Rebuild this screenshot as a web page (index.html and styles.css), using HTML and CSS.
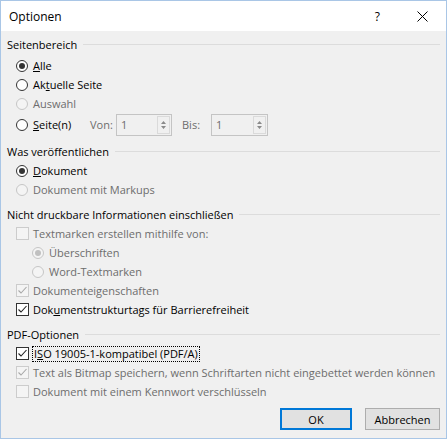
FILE: index.html
```html
<!DOCTYPE html>
<html lang="de">
<head>
<meta charset="utf-8">
<title>Optionen</title>
<link rel="stylesheet" href="styles.css">
</head>
<body>
<div class="window">
  <div class="titlebar">
    <span class="title">Optionen</span>
    <span class="help">?</span>
    <span class="close"><svg width="11" height="11" viewBox="0 0 11 11"><path d="M0.5 0.5 L10.5 10.5 M10.5 0.5 L0.5 10.5" stroke="#000" stroke-width="1" fill="none"/></svg></span>
  </div>
  <div class="content">
    <section class="group first">
      <div class="group-head"><span>Seitenbereich</span></div>
      <div class="row"><span class="radio on"></span><span class="label"><u>A</u>lle</span></div>
      <div class="row"><span class="radio"></span><span class="label">Ak<u>t</u>uelle Seite</span></div>
      <div class="row disabled"><span class="radio"></span><span class="label">Auswahl</span></div>
      <div class="row spinrow">
        <span class="radio"></span><span class="label pages"><u>S</u>eite(n)</span>
        <span class="spin-label von">Von:</span>
        <span class="spin s1"><span class="spin-val">1</span><span class="spin-btn"><svg width="7" height="12" viewBox="0 0 7 12"><path d="M3.5 2 L6 5 L1 5 Z M1 7 L6 7 L3.5 10 Z" fill="#8a8a8a"/></svg></span></span>
        <span class="spin-label bis">Bis:</span>
        <span class="spin s2"><span class="spin-val">1</span><span class="spin-btn"><svg width="7" height="12" viewBox="0 0 7 12"><path d="M3.5 2 L6 5 L1 5 Z M1 7 L6 7 L3.5 10 Z" fill="#8a8a8a"/></svg></span></span>
      </div>
    </section>
    <section class="group">
      <div class="group-head"><span>Was veröffentlichen</span></div>
      <div class="row"><span class="radio on"></span><span class="label"><u>D</u>okument</span></div>
      <div class="row disabled"><span class="radio"></span><span class="label">Dokument mit Markups</span></div>
    </section>
    <section class="group">
      <div class="group-head"><span>Nicht druckbare Informationen einschließen</span></div>
      <div class="row disabled"><span class="check"></span><span class="label">Textmarken erstellen mithilfe von:</span></div>
      <div class="row sub disabled"><span class="radio on"></span><span class="label">Überschriften</span></div>
      <div class="row sub disabled"><span class="radio"></span><span class="label">Word-Textmarken</span></div>
      <div class="row disabled"><span class="check"><svg width="11" height="11" viewBox="0 0 11 11"><path d="M1.5 5.5 L4 8 L9.5 2" stroke="#a8a8a8" stroke-width="1.1" fill="none"/></svg></span><span class="label">Dokumenteigenschaften</span></div>
      <div class="row"><span class="check"><svg width="11" height="11" viewBox="0 0 11 11"><path d="M1.5 5.5 L4 8 L9.5 2" stroke="#222" stroke-width="1.1" fill="none"/></svg></span><span class="label">Dok<u>u</u>mentstrukturtags für Barrierefreiheit</span></div>
    </section>
    <section class="group">
      <div class="group-head"><span>PDF-Optionen</span></div>
      <div class="row"><span class="check"><svg width="11" height="11" viewBox="0 0 11 11"><path d="M1.5 5.5 L4 8 L9.5 2" stroke="#222" stroke-width="1.1" fill="none"/></svg></span><span class="label focus">I<u>S</u>O 19005-1-kompatibel (PDF/A)</span></div>
      <div class="row disabled"><span class="check"><svg width="11" height="11" viewBox="0 0 11 11"><path d="M1.5 5.5 L4 8 L9.5 2" stroke="#a8a8a8" stroke-width="1.1" fill="none"/></svg></span><span class="label">Text als Bitmap speichern, wenn Schriftarten nicht eingebettet werden können</span></div>
      <div class="row disabled"><span class="check"></span><span class="label">Dokument mit einem Kennwort verschlüsseln</span></div>
    </section>
  </div>
  <div class="buttons">
    <span class="btn default">OK</span>
    <span class="btn cancel">Abbrechen</span>
  </div>
</div>
</body>
</html>
```

FILE: styles.css
```css
html, body {
  margin: 0;
  padding: 0;
  background: #f0f0f0;
}
body {
  font-family: "Open Sans", "Noto Sans", sans-serif;
  font-size: 11px;
  color: #000;
}
.window {
  width: 447px;
  height: 439px;
  box-sizing: border-box;
  border: 1px solid #a9c6e6;
  background: #f0f0f0;
  display: flex;
  flex-direction: column;
}
.titlebar {
  height: 30px;
  background: #fff;
  display: flex;
  align-items: center;
  padding: 0 18px 0 8px;
  flex: none;
}
.title {
  flex: 1;
  font-size: 12px;
}
.help {
  font-size: 12px;
  margin-right: 37px;
}
.close {
  display: flex;
  width: 11px;
  height: 11px;
}
.content {
  padding: 3px 6px 0 6px;
}
.group + .group {
  margin-top: 5px;
}
.group-head {
  height: 20px;
  display: flex;
  align-items: center;
  font-size: 11px;
}
.group-head::after {
  content: "";
  flex: 1;
  height: 1px;
  background: #dcdcdc;
  margin-left: 6px;
}
.first .group-head + .row {
  margin-top: 2px;
}
.row {
  height: 19px;
  display: flex;
  align-items: center;
  padding-left: 9px;
}
.row.sub {
  padding-left: 25px;
}
.label {
  margin-left: 5px;
  white-space: nowrap;
}
.row.disabled {
  color: #6d6d6d;
}
u {
  text-decoration: underline;
  text-underline-offset: 1px;
}
.radio {
  width: 12px;
  height: 12px;
  box-sizing: border-box;
  border: 1px solid #333;
  border-radius: 50%;
  background: #fff;
  display: flex;
  align-items: center;
  justify-content: center;
  flex: none;
}
.radio.on::after {
  content: "";
  width: 6px;
  height: 6px;
  border-radius: 50%;
  background: #333;
}
.disabled .radio {
  border-color: #c6c6c6;
  background: #f4f4f4;
}
.disabled .radio.on::after {
  background: #c0c0c0;
}
.check {
  width: 13px;
  height: 13px;
  box-sizing: border-box;
  border: 1px solid #333;
  background: #fff;
  display: flex;
  align-items: center;
  justify-content: center;
  flex: none;
}
.disabled .check {
  border-color: #cccccc;
  background: #f4f4f4;
}
.row .check + .label {
  margin-left: 4px;
}
.focus {
  outline: 1px dotted #000;
  outline-offset: 0;
  padding: 0 1px;
  margin-left: 3px;
  line-height: 14px;
}
.spinrow {
  height: 23px;
}
.pages {
  width: 57px;
  flex: none;
}
.spin-label {
  color: #6d6d6d;
  flex: none;
}
.von {
  width: 26px;
}
.bis {
  width: 29px;
  margin-left: 10px;
}
.spin {
  height: 22px;
  box-sizing: border-box;
  border: 1px solid #c4c4c4;
  background: #f0f0f0;
  display: flex;
  align-items: stretch;
  color: #6d6d6d;
  flex: none;
}
.s1 {
  width: 56px;
}
.s2 {
  width: 57px;
}
.spin-val {
  flex: 1;
  padding-left: 4px;
  display: flex;
  align-items: center;
}
.spin-btn {
  width: 13px;
  margin: 1px;
  border: 1px solid #dadada;
  box-sizing: border-box;
  display: flex;
  align-items: center;
  justify-content: center;
}
.buttons {
  margin-top: auto;
  display: flex;
  justify-content: flex-end;
  gap: 13px;
  padding: 0 6px 8px 0;
}
.btn {
  height: 22px;
  box-sizing: border-box;
  border: 1px solid #adadad;
  background: #e1e1e1;
  display: flex;
  align-items: center;
  justify-content: center;
  font-size: 11px;
}
.btn.default {
  width: 72px;
  border: 2px solid #0078d7;
}
.btn.cancel {
  width: 75px;
}
```
